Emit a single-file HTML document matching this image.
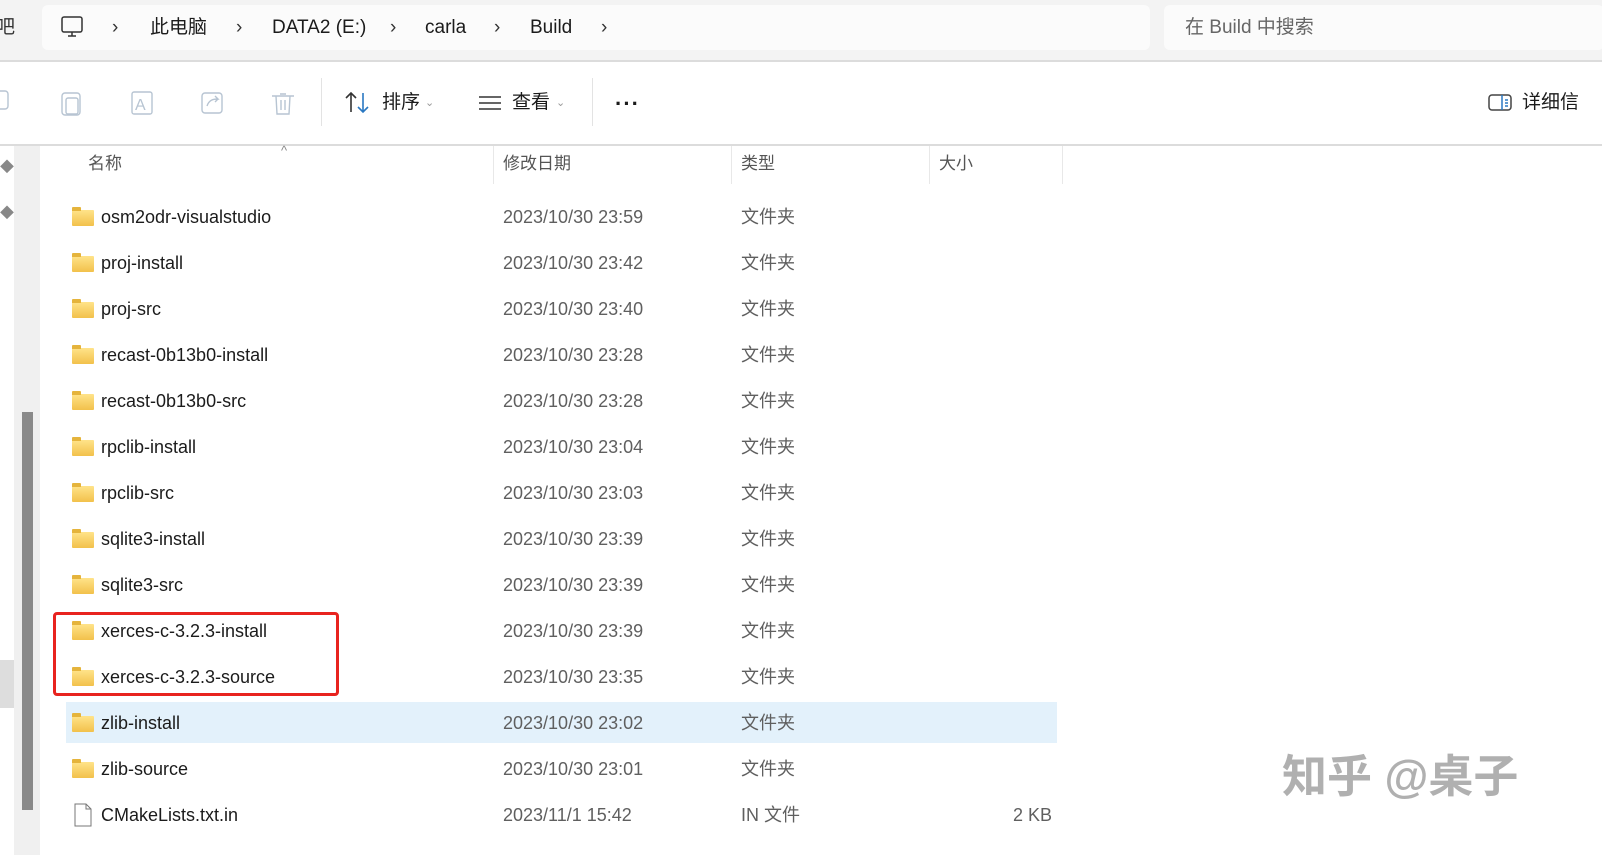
<!DOCTYPE html>
<html><head><meta charset="utf-8"><style>
*{margin:0;padding:0;box-sizing:border-box}
body{width:1602px;height:855px;overflow:hidden;background:#fff;font-family:"Liberation Sans","Noto Sans CJK SC",sans-serif;position:relative;color:#1b1b1b}
.a{position:absolute;white-space:nowrap;line-height:24px}
.top{left:0;top:0;width:1602px;height:62px;background:#f3f3f3;border-bottom:2px solid #dcdcdc}
.addr{left:42px;top:5px;width:1108px;height:45px;background:#fbfbfb;border-radius:6px}
.srch{left:1164px;top:5px;width:440px;height:45px;background:#fbfbfb;border-radius:6px}
.tb{top:144px;left:0;width:1602px;height:2px;background:#dcdcdc}
.t{font-size:19px}
.row{font-size:18px}
.d{color:#5f5f5f}
.fold{position:absolute;width:22px;height:16px;background:linear-gradient(#ffe38a,#f2c14b);border-radius:1px}
.fold:before{content:"";position:absolute;left:0;top:-3px;width:9px;height:4px;background:#e5b43c;border-radius:1px 1px 0 0}
</style></head><body>
<div class="a top"></div>
<div class="a addr"></div>
<div class="a srch"></div>
<svg class="a" style="left:60px;top:15px" width="24" height="24" viewBox="0 0 24 24" fill="none" stroke="#333" stroke-width="1.5"><rect x="2" y="2" width="20" height="15" rx="2"/><path d="M8 21h8M12 17v4"/></svg>
<div class="a t" style="left:112px;top:16px;color:#333">›</div>
<div class="a t" style="left:150px;top:16px">此电脑</div>
<div class="a t" style="left:236px;top:16px;color:#333">›</div>
<div class="a t" style="left:272px;top:16px">DATA2 (E:)</div>
<div class="a t" style="left:390px;top:16px;color:#333">›</div>
<div class="a t" style="left:425px;top:16px">carla</div>
<div class="a t" style="left:494px;top:16px;color:#333">›</div>
<div class="a t" style="left:530px;top:16px">Build</div>
<div class="a t" style="left:601px;top:16px;color:#333">›</div>
<div class="a t" style="left:1185px;top:16px;color:#666">在 Build 中搜索</div>
<div class="a t" style="left:-4px;top:16px;color:#333">吧</div>
<svg class="a" style="left:0;top:88px" width="300" height="30" fill="none" stroke="#b7c4d2" stroke-width="1.4">
<rect x="-6" y="3" width="14" height="18" rx="3"/>
<rect x="62" y="5" width="18" height="22" rx="3"/><rect x="66" y="10" width="12" height="16" rx="2"/>
<rect x="132" y="4" width="20" height="22" rx="2"/><text x="135" y="22" font-size="16" fill="#b7c4d2" stroke="none" font-family="Liberation Sans">A</text>
<rect x="202" y="5" width="20" height="20" rx="3"/><path d="M207 18c2-6 6-7 11-7l-3-3m3 3-3 3"/>
<path d="M272 8h22M276 8l1 18h12l1-18M280 6h6M281 12v10M285 12v10"/>
</svg>
<div class="a" style="left:321px;top:78px;width:1px;height:48px;background:#e3e3e3"></div>
<div class="a" style="left:592px;top:78px;width:1px;height:48px;background:#e3e3e3"></div>
<svg class="a" style="left:344px;top:90px" width="28" height="26" fill="none" stroke-width="1.6"><path d="M7 22V3M2 8l5-5 5 5" stroke="#333"/><path d="M19 3v19M14 17l5 5 5-5" stroke="#2a78c2"/></svg>
<div class="a t" style="left:382px;top:91px">排序</div>
<div class="a" style="left:425px;top:91px;font-size:11px;color:#999">⌄</div>
<svg class="a" style="left:478px;top:94px" width="24" height="18" stroke="#333" stroke-width="1.5"><path d="M1 3h22M1 9h22M1 15h22"/></svg>
<div class="a t" style="left:512px;top:91px">查看</div>
<div class="a" style="left:556px;top:91px;font-size:11px;color:#999">⌄</div>
<div class="a" style="left:615px;top:92px;font-size:22px;font-weight:bold;letter-spacing:1px">···</div>
<svg class="a" style="left:1488px;top:93px" width="26" height="20" fill="none" stroke-width="1.5"><rect x="1" y="2" width="22" height="15" rx="3" stroke="#444"/><path d="M14 2v15" stroke="#2a78c2"/><path d="M17 7h3M17 10h3M17 13h3" stroke="#2a78c2"/></svg>
<div class="a t" style="left:1522px;top:91px">详细信</div>
<div class="a tb"></div>
<div class="a" style="left:14px;top:146px;width:26px;height:709px;background:#f0f0f0"></div>
<div class="a" style="left:22px;top:412px;width:11px;height:398px;background:#8a8a8a"></div>
<div class="a" style="left:0;top:660px;width:14px;height:48px;background:#ddd"></div>
<div class="a" style="left:0;top:155px;color:#888;font-size:14px">◆</div>
<div class="a" style="left:0;top:201px;color:#888;font-size:14px">◆</div>
<div class="a" style="left:88px;top:152px;font-size:17px;color:#555">名称</div>
<div class="a" style="left:281px;top:139px;font-size:13px;color:#888">^</div>
<div class="a" style="left:493px;top:146px;width:1px;height:38px;background:#e8e8e8"></div>
<div class="a" style="left:731px;top:146px;width:1px;height:38px;background:#e8e8e8"></div>
<div class="a" style="left:929px;top:146px;width:1px;height:38px;background:#e8e8e8"></div>
<div class="a" style="left:1062px;top:146px;width:1px;height:38px;background:#e8e8e8"></div>
<div class="a" style="left:503px;top:152px;font-size:17px;color:#555">修改日期</div>
<div class="a" style="left:741px;top:152px;font-size:17px;color:#555">类型</div>
<div class="a" style="left:939px;top:152px;font-size:17px;color:#555">大小</div>
<div class="a" style="left:66px;top:702px;width:991px;height:41px;background:#e3f1fb"></div>
<div class="a" style="left:53px;top:612px;width:286px;height:84px;border:3px solid #e8231f;border-radius:4px"></div>
<div id="rows"></div>
<div class="a" style="left:1282px;top:752px;font-size:45px;line-height:50px;color:#b0b0b0;font-weight:bold">知乎 @桌子</div>
<script>
var r=[["osm2odr-visualstudio","23:59"],["proj-install","23:42"],["proj-src","23:40"],["recast-0b13b0-install","23:28"],["recast-0b13b0-src","23:28"],["rpclib-install","23:04"],["rpclib-src","23:03"],["sqlite3-install","23:39"],["sqlite3-src","23:39"],["xerces-c-3.2.3-install","23:39"],["xerces-c-3.2.3-source","23:35"],["zlib-install","23:02"],["zlib-source","23:01"]];
var h="";
r.forEach(function(x,i){var y=217+46*i;
h+='<div class="fold" style="left:72px;top:'+(y-7)+'px"></div><div class="a row" style="left:101px;top:'+(y-12)+'px">'+x[0]+'</div><div class="a row d" style="left:503px;top:'+(y-12)+'px">2023/10/30 '+x[1]+'</div><div class="a row d" style="left:741px;top:'+(y-12)+'px">文件夹</div>';});
var y=815;
h+='<svg class="a" style="left:74px;top:'+(y-12)+'px" width="18" height="24" fill="#fff" stroke="#777"><path d="M1 1h11l5 5v17H1z"/><path d="M12 1v5h5" fill="none"/></svg><div class="a row" style="left:101px;top:'+(y-12)+'px">CMakeLists.txt.in</div><div class="a row d" style="left:503px;top:'+(y-12)+'px">2023/11/1 15:42</div><div class="a row d" style="left:741px;top:'+(y-12)+'px">IN 文件</div><div class="a row d" style="left:1013px;top:'+(y-12)+'px">2 KB</div>';
document.getElementById("rows").innerHTML=h;
</script>
</body></html>
